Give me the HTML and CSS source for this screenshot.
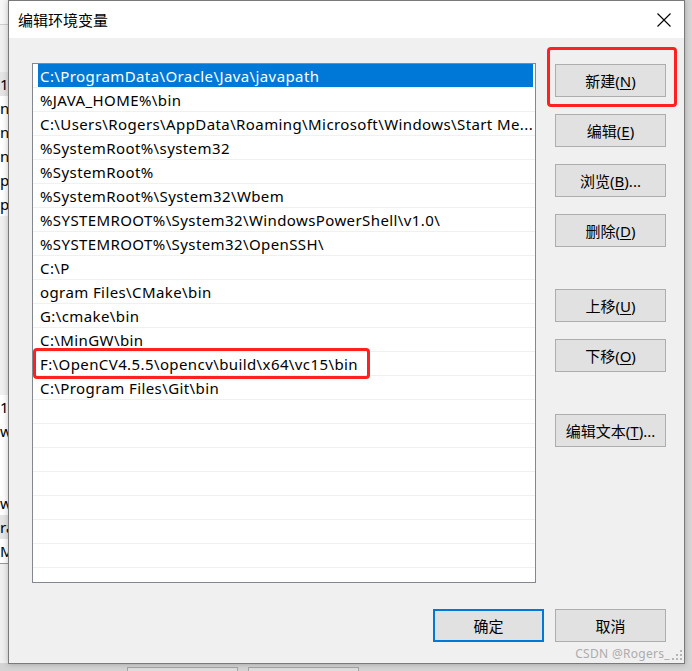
FILE: index.html
```html
<!DOCTYPE html>
<html lang="zh-CN">
<head>
<meta charset="utf-8">
<title>编辑环境变量</title>
<link rel="stylesheet" href="styles.css">
</head>
<body>
<div class="desk">
  <div class="behind-left">
    <div class="bl-head"></div>
    <div class="bl-panel">
      <div class="bl-row bl-sel">1.</div>
      <div class="bl-row">n</div>
      <div class="bl-row">n</div>
      <div class="bl-row">na</div>
      <div class="bl-row">p</div>
      <div class="bl-row">p</div>
    </div>
    <div class="bl-panel2">
      <div class="bl-row">1</div>
      <div class="bl-row">w</div>
      <div class="bl-row"></div>
      <div class="bl-row"></div>
      <div class="bl-row">w</div>
      <div class="bl-row bl-sel">ra</div>
      <div class="bl-row">M</div>
    </div>
  </div>
  <div class="behind-bottom">
    <div class="bb-btn bb-1"></div>
    <div class="bb-btn bb-2"></div>
  </div>

  <div class="dialog">
    <div class="titlebar">
      <span class="title">编辑环境变量</span>
      <svg class="close" width="14" height="14" viewBox="0 0 14 14"><path d="M0.5 0.5 L13.5 13.5 M13.5 0.5 L0.5 13.5" stroke="#000" stroke-width="1.1" fill="none"/></svg>
    </div>
    <div class="content">
      <div class="main">
        <div class="list">
          <div class="row sel"><span class="txt">C:\ProgramData\Oracle\Java\javapath</span></div>
          <div class="row"><span class="txt">%JAVA_HOME%\bin</span></div>
          <div class="row"><span class="txt">C:\Users\Rogers\AppData\Roaming\Microsoft\Windows\Start Me...</span></div>
          <div class="row"><span class="txt">%SystemRoot%\system32</span></div>
          <div class="row"><span class="txt">%SystemRoot%</span></div>
          <div class="row"><span class="txt">%SystemRoot%\System32\Wbem</span></div>
          <div class="row"><span class="txt">%SYSTEMROOT%\System32\WindowsPowerShell\v1.0\</span></div>
          <div class="row"><span class="txt">%SYSTEMROOT%\System32\OpenSSH\</span></div>
          <div class="row"><span class="txt">C:\P</span></div>
          <div class="row"><span class="txt">ogram Files\CMake\bin</span></div>
          <div class="row"><span class="txt">G:\cmake\bin</span></div>
          <div class="row"><span class="txt">C:\MinGW\bin</span></div>
          <div class="row"><span class="txt">F:\OpenCV4.5.5\opencv\build\x64\vc15\bin</span></div>
          <div class="row"><span class="txt">C:\Program Files\Git\bin</span></div>
          <div class="row"><span class="txt"></span></div>
          <div class="row"><span class="txt"></span></div>
          <div class="row"><span class="txt"></span></div>
          <div class="row"><span class="txt"></span></div>
          <div class="row"><span class="txt"></span></div>
          <div class="row"><span class="txt"></span></div>
          <div class="row"><span class="txt"></span></div>
          <div class="row"><span class="txt"></span></div>
        </div>
        <div class="side">
          <button class="btn">新建(<u>N</u>)</button>
          <button class="btn gap-s">编辑(<u>E</u>)</button>
          <button class="btn gap-s">浏览(<u>B</u>)...</button>
          <button class="btn gap-s">删除(<u>D</u>)</button>
          <button class="btn gap-l">上移(<u>U</u>)</button>
          <button class="btn gap-s">下移(<u>O</u>)</button>
          <button class="btn gap-l">编辑文本(<u>T</u>)...</button>
        </div>
      </div>
      <div class="footer">
        <button class="btn default">确定</button>
        <button class="btn">取消</button>
      </div>
    </div>
    <div class="mark">CSDN @Rogers_<svg class="grip" width="10" height="10" viewBox="0 0 10 10"><g fill="#b5b5b5"><rect x="8" y="0" width="2" height="2"/><rect x="4" y="4" width="2" height="2"/><rect x="8" y="4" width="2" height="2"/><rect x="0" y="8" width="2" height="2"/><rect x="4" y="8" width="2" height="2"/><rect x="8" y="8" width="2" height="2"/></g></svg></div>
    <div class="hl hl-new"></div>
    <div class="hl hl-row"></div>
  </div>
</div>
</body>
</html>
```

FILE: styles.css
```css
* { box-sizing: border-box; }
html, body { margin: 0; padding: 0; }
body {
  background: #d6d6d6;
  font-family: "Noto Sans", "Noto Sans CJK SC", sans-serif;
  overflow: hidden;
}
.desk {
  position: relative;
  width: 692px;
  height: 671px;
  padding-left: 8px;
}

/* windows behind the dialog */
.behind-left {
  position: absolute;
  left: 0; top: 0;
  width: 20px; height: 671px;
  background: #f0f0f0;
  font-size: 15px;
  color: #000;
}
.bl-head { height: 25px; border-bottom: 1px solid #cfcfcf; background: #f7f7f7; }
.bl-panel { margin-top: 47px; background: #fff; }
.bl-panel2 { margin-top: 179px; background: #fff; border-bottom: 1px solid #999; }
.bl-row { height: 24px; line-height: 24px; padding-left: 0; white-space: nowrap; }
.bl-sel { background: #e5e5e5; }
.behind-bottom {
  position: absolute;
  left: 0; top: 663px;
  width: 692px; height: 8px;
  background: #d4d4d4;
}
.bb-btn {
  position: absolute;
  top: 4px; height: 12px;
  border: 1px solid #a6a6a6;
  background: #dedede;
}
.bb-1 { left: 127px; width: 111px; }
.bb-2 { left: 248px; width: 111px; }

/* dialog */
.dialog {
  position: relative;
  width: 677px;
  height: 664px;
  border: 1px solid #7a7a7a;
  background: #f0f0f0;
  box-shadow: 0 0 6px rgba(0, 0, 0, 0.25);
}
.titlebar {
  height: 37px;
  background: #fff;
  display: flex;
  align-items: center;
  justify-content: space-between;
  padding: 0 13px 0 9px;
}
.title { font-size: 15px; color: #000; }
.close { display: block; }

.content { padding: 25px 0 0 23px; }
.main { display: flex; gap: 19px; align-items: flex-start; }
.list {
  width: 504px;
  height: 520px;
  border: 1px solid #828790;
  background: #fff;
  overflow: hidden;
}
.row {
  height: 24px;
  border-bottom: 1px solid #f0f0f0;
  display: flex;
  padding: 0 2px 0 5px;
}
.row .txt {
  flex: 1;
  padding: 2px 0 0 2px;
  font-size: 15px;
  letter-spacing: 0.4px;
  line-height: 21px;
  color: #000;
  white-space: nowrap;
  overflow: hidden;
}
.row.sel .txt { background: #0078d7; color: #fff; }

.side { display: flex; flex-direction: column; padding-top: 1px; }
.btn {
  width: 111px;
  height: 33px;
  border: 1px solid #adadad;
  background: #e1e1e1;
  font-family: "Noto Sans", "Noto Sans CJK SC", sans-serif;
  font-size: 15px;
  color: #000;
  padding: 0;
  margin: 0;
  line-height: 20px;
  border-radius: 0;
}
.btn u { text-underline-offset: 2px; }
.gap-s { margin-top: 17px; }
.gap-l { margin-top: 42px; }
.btn.default { border: 2px solid #0078d7; }

.footer {
  width: 634px;
  margin-top: 26px;
  display: flex;
  justify-content: flex-end;
  gap: 11px;
}

.mark {
  position: absolute;
  right: 2px;
  bottom: 1px;
  display: flex;
  align-items: center;
  gap: 2px;
  font-size: 12px;
  letter-spacing: 0.3px;
  color: #acacac;
}
.grip { display: block; margin-top: 2px; }

.hl {
  position: absolute;
  border: 3px solid #ff2020;
  border-radius: 4px;
}
.hl-new { left: 538px; top: 46px; width: 130px; height: 60px; }
.hl-row { left: 24px; top: 347px; width: 337px; height: 31px; }
```
